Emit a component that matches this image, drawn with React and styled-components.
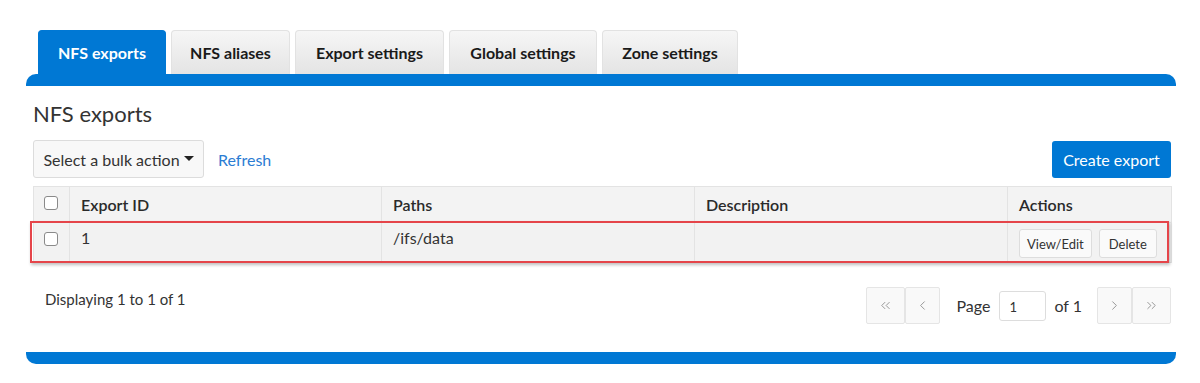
import React from 'react';
import styled, { createGlobalStyle } from 'styled-components';
import { ChevronLeft, ChevronRight, ChevronsLeft, ChevronsRight } from 'lucide-react';

const GlobalStyle = createGlobalStyle`
  body {
    margin: 0;
    background: #fff;
    font-family: Lato, "Liberation Sans", sans-serif;
    color: #333;
  }
`;

const Page = styled.div`
  width: 1150px;
  margin-left: 26px;
  padding-top: 30px;
`;

const TabList = styled.div`
  display: flex;
  gap: 5px;
  padding-left: 12px;
`;

const Tab = styled.div`
  height: 44px;
  box-sizing: border-box;
  width: ${p => p.$w}px;
  display: flex;
  align-items: center;
  justify-content: center;
  padding-bottom: 1px;
  font-size: 16px;
  font-weight: 700;
  border-radius: 4px 4px 0 0;
  color: ${p => (p.$active ? '#fff' : '#1a1a1a')};
  background: ${p => (p.$active ? '#0078d4' : 'linear-gradient(#f6f6f6, #e4e4e4)')};
  border: 1px solid ${p => (p.$active ? '#0078d4' : '#e2e2e2')};
  border-bottom: none;
`;

const Strip = styled.div`
  height: 12px;
  background: #0078d4;
  border-radius: ${p => (p.$bottom ? '0 0 10px 10px' : '10px 10px 0 0')};
`;

const Content = styled.div`
  padding: 0 5px 0 7px;
`;

const Heading = styled.h2`
  margin: 0;
  padding-top: 14px;
  height: 40px;
  font-size: 22px;
  font-weight: 400;
  color: #333;
`;

const Toolbar = styled.div`
  display: flex;
  align-items: center;
  height: 38px;
`;

const BulkButton = styled.button`
  height: 38px;
  width: 171px;
  box-sizing: border-box;
  border: 1px solid #dcdcdc;
  border-radius: 3px;
  background: #f8f8f8;
  font-family: inherit;
  font-size: 16px;
  color: #333;
  display: flex;
  align-items: center;
  justify-content: center;
  gap: 4px;
  padding: 0;
`;

const Caret = styled.span`
  width: 0;
  height: 0;
  border-left: 5px solid transparent;
  border-right: 5px solid transparent;
  border-top: 5px solid #222;
  margin-top: -2px;
`;

const Link = styled.a`
  margin-left: 14px;
  color: #2b7cd3;
  font-size: 16px;
  text-decoration: none;
`;

const PrimaryButton = styled.button`
  margin-left: auto;
  height: 37px;
  width: 119px;
  border: none;
  border-radius: 3px;
  background: #0078d4;
  color: #fff;
  font-family: inherit;
  font-size: 16px;
  padding: 0;
`;

const TableWrap = styled.div`
  position: relative;
  margin-top: 8px;
`;

const Table = styled.table`
  width: 100%;
  border-collapse: collapse;
  table-layout: fixed;
  font-size: 16px;
`;

const Th = styled.th`
  height: 36px;
  box-sizing: border-box;
  background: #f3f3f3;
  border: 1px solid #e3e3e3;
  text-align: left;
  font-weight: 600;
  padding: 0 11px 1px;
  color: #2a2a2a;
`;

const Td = styled.td`
  height: 40px;
  box-sizing: border-box;
  background: #f2f2f2;
  border: 1px solid #e3e3e3;
  border-top: none;
  vertical-align: top;
  padding: 5px 11px 0;
  color: #333;
`;

const Check = styled.span`
  display: block;
  width: 14px;
  height: 14px;
  box-sizing: border-box;
  border: 1px solid #8a8a8a;
  border-radius: 3px;
  background: #fff;
  margin: ${p => (p.$head ? '-3px 0 0 -1px' : '4px 0 0 -1px')};
`;

const Actions = styled.div`
  display: flex;
  gap: 7px;
  margin-top: 1px;
`;

const SmallButton = styled.button`
  height: 29px;
  box-sizing: border-box;
  padding: 0 ${p => p.$pad}px;
  border: 1px solid #ddd;
  border-radius: 3px;
  background: #fafafa;
  font-family: inherit;
  font-size: 13px;
  color: #333;
`;

const Highlight = styled.div`
  position: absolute;
  left: -3px;
  top: 35px;
  width: 1139px;
  height: 42px;
  box-sizing: border-box;
  border: 2px solid #e5454a;
  box-shadow: 1px 2px 3px rgba(0, 0, 0, 0.25);
  pointer-events: none;
`;

const Footer = styled.div`
  display: flex;
  align-items: center;
  height: 37px;
  margin-top: 24px;
  margin-bottom: 28px;
`;

const Summary = styled.span`
  margin-left: 12px;
  font-size: 15px;
  margin-top: -14px;
`;

const Pager = styled.div`
  margin-left: auto;
  display: flex;
  align-items: center;
  font-size: 16px;
`;

const PageButton = styled.button`
  height: 37px;
  width: ${p => p.$w}px;
  box-sizing: border-box;
  border: 1px solid #e5e5e5;
  border-radius: 2px;
  background: #f9f9f9;
  color: #8a8a8a;
  display: flex;
  align-items: center;
  justify-content: center;
  padding: 0;
`;

const PageLabel = styled.span`
  margin: 0 ${p => p.$r}px 0 ${p => p.$l}px;
  color: #333;
`;

const PageInput = styled.input`
  width: 47px;
  height: 30px;
  box-sizing: border-box;
  border: 1px solid #ddd;
  border-radius: 3px;
  padding: 3px 0 0 9px;
  font-family: inherit;
  font-size: 13px;
  color: #333;
`;

export default function App() {
  const tabs = [
    { label: 'NFS exports', w: 128, active: true },
    { label: 'NFS aliases', w: 119 },
    { label: 'Export settings', w: 149 },
    { label: 'Global settings', w: 148 },
    { label: 'Zone settings', w: 136 },
  ];

  return (
    <>
      <GlobalStyle />
      <Page>
        <TabList>
          {tabs.map(t => (
            <Tab key={t.label} $active={t.active} $w={t.w}>
              {t.label}
            </Tab>
          ))}
        </TabList>
        <Strip />
        <Content>
          <Heading>NFS exports</Heading>
          <Toolbar>
            <BulkButton>
              Select a bulk action <Caret />
            </BulkButton>
            <Link href="#">Refresh</Link>
            <PrimaryButton>Create export</PrimaryButton>
          </Toolbar>
          <TableWrap>
            <Table>
              <colgroup>
                <col style={{ width: 36 }} />
                <col style={{ width: 312 }} />
                <col style={{ width: 313 }} />
                <col style={{ width: 313 }} />
                <col style={{ width: 164 }} />
              </colgroup>
              <thead>
                <tr>
                  <Th>
                    <Check $head />
                  </Th>
                  <Th>Export ID</Th>
                  <Th>Paths</Th>
                  <Th>Description</Th>
                  <Th>Actions</Th>
                </tr>
              </thead>
              <tbody>
                <tr>
                  <Td>
                    <Check />
                  </Td>
                  <Td>1</Td>
                  <Td>/ifs/data</Td>
                  <Td />
                  <Td>
                    <Actions>
                      <SmallButton $pad={7}>View/Edit</SmallButton>
                      <SmallButton $pad={9}>Delete</SmallButton>
                    </Actions>
                  </Td>
                </tr>
              </tbody>
            </Table>
            <Highlight />
          </TableWrap>
          <Footer>
            <Summary>Displaying 1 to 1 of 1</Summary>
            <Pager>
              <PageButton $w={39}>
                <ChevronsLeft size={15} strokeWidth={1.4} />
              </PageButton>
              <PageButton $w={35}>
                <ChevronLeft size={15} strokeWidth={1.4} />
              </PageButton>
              <PageLabel $l={16} $r={9}>Page</PageLabel>
              <PageInput defaultValue="1" />
              <PageLabel $l={8} $r={15}>of 1</PageLabel>
              <PageButton $w={35}>
                <ChevronRight size={15} strokeWidth={1.4} />
              </PageButton>
              <PageButton $w={39}>
                <ChevronsRight size={15} strokeWidth={1.4} />
              </PageButton>
            </Pager>
          </Footer>
        </Content>
        <Strip $bottom />
      </Page>
    </>
  );
}
